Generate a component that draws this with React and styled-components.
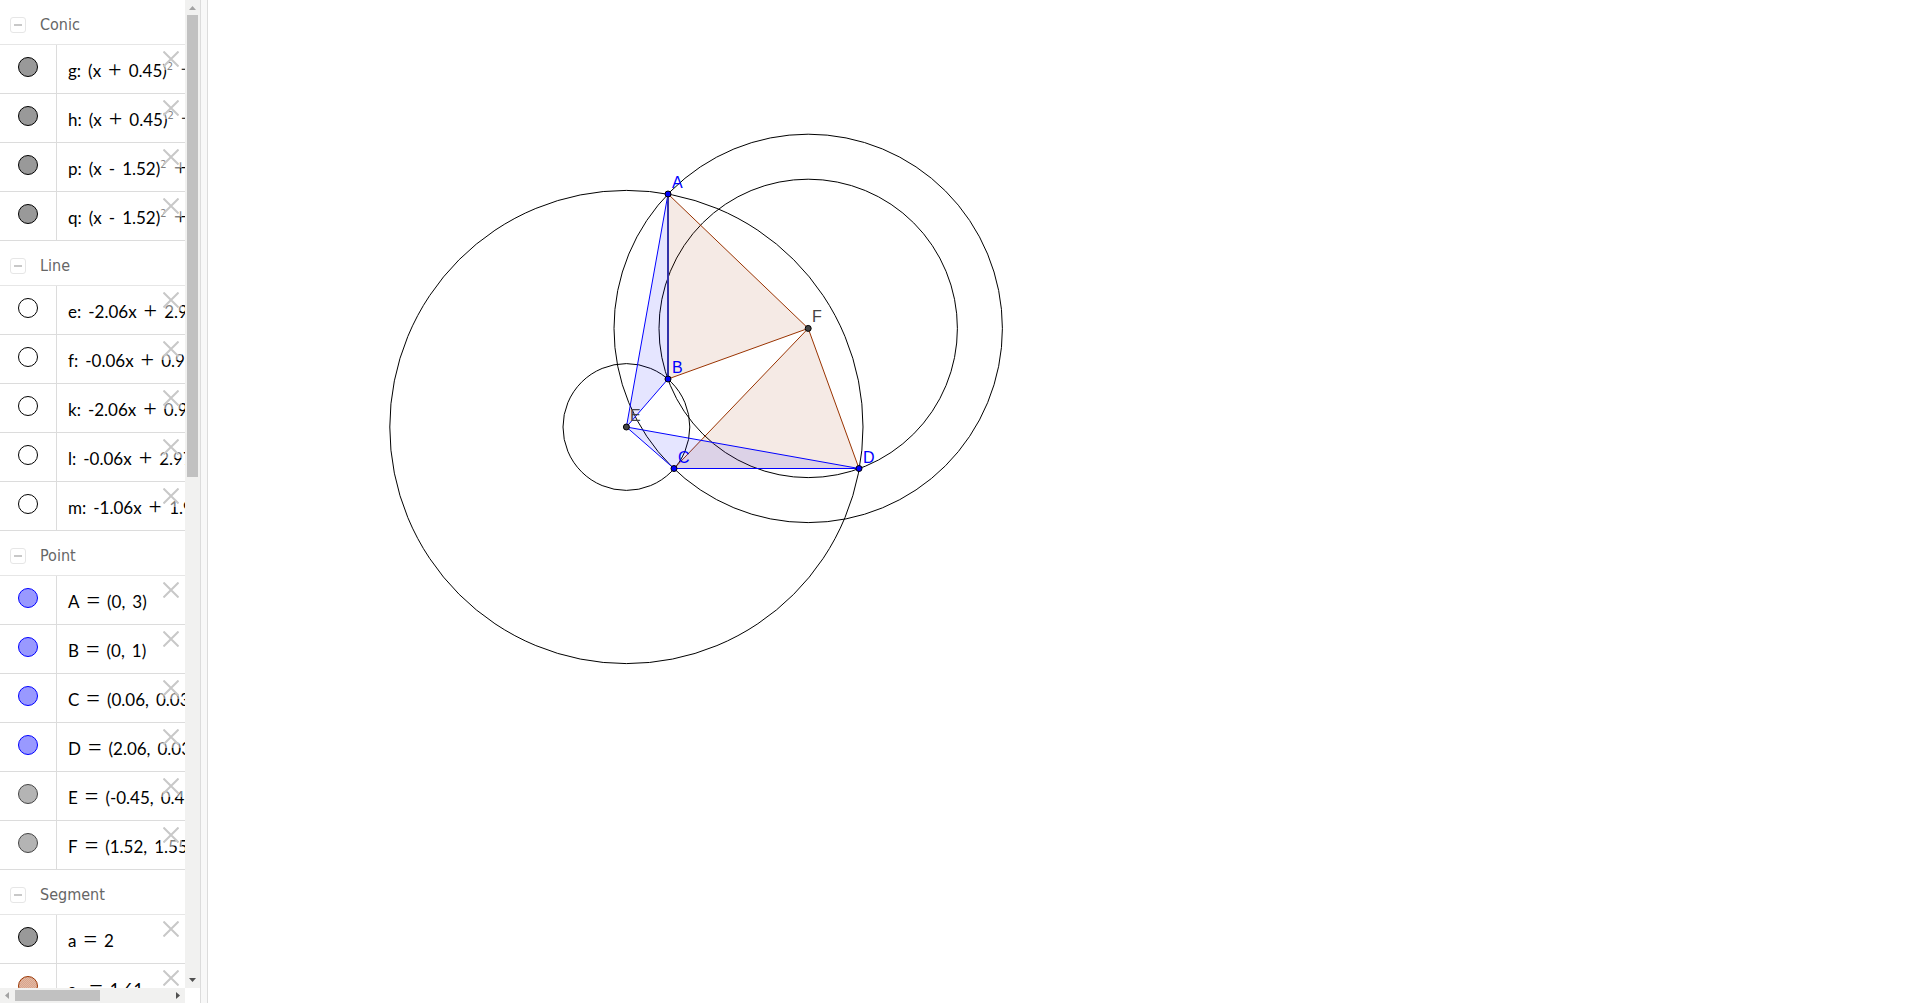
import React from "react";
import styled, { createGlobalStyle, css } from "styled-components";

const GlobalStyle = createGlobalStyle`
	body {
		margin: 0;
		background: #fff;
		overflow: hidden;
	}
`;

const StyledPage = styled.div`
	box-sizing: border-box;
	display: flex;
	height: 100vh;
	padding-bottom: 2px;
`;

const StyledSidebar = styled.aside`
	flex: none;
	width: 200px;
	display: grid;
	grid-template-columns: minmax(0, 1fr) 15px;
	grid-template-rows: minmax(0, 1fr) 15px;
`;

const StyledList = styled.div`
	overflow: hidden;
`;

const StyledDragger = styled.div`
	flex: none;
	width: 6px;
	background: #f8f8f8;
	border-left: 1px solid #dcdcdc;
	border-right: 1px solid #dcdcdc;
`;

const StyledGroupHeader = styled.div`
	box-sizing: border-box;
	height: 45px;
	padding: 0 10px;
	display: flex;
	align-items: center;
	gap: 14px;
	border-bottom: 1px solid #e6e6e6;
`;

const StyledTitle = styled.h2`
	margin: 0;
	padding-top: 6px;
	font: 400 16px/22px "DejaVu Sans Condensed", "Open Sans", sans-serif;
	color: #666;
`;

const StyledCollapse = styled.button`
	box-sizing: border-box;
	width: 16px;
	height: 16px;
	margin-top: 5px;
	padding: 0;
	display: flex;
	align-items: center;
	justify-content: center;
	background: #fff;
	border: 1px solid #e6e6e6;
	border-radius: 3px;

	&::before {
		content: "";
		width: 8px;
		height: 2px;
		background: #c8c8c8;
	}
`;

const StyledRow = styled.div`
	position: relative;
	box-sizing: border-box;
	height: 49px;
	display: flex;
	border-bottom: 1px solid #dcdcdc;
`;

const StyledMarbleCell = styled.div`
	box-sizing: border-box;
	flex: none;
	width: 57px;
	padding: 12px 18px;
	border-right: 1px solid #dcdcdc;
`;

const StyledMarble = styled.button`
	box-sizing: border-box;
	display: block;
	width: 20px;
	height: 20px;
	padding: 0;
	border-radius: 50%;
	border: 1px solid ${({ $line }) => $line};
	background: ${({ $fill }) => $fill};
`;

const StyledFormula = styled.div`
	display: flex;
	flex: 1;
	align-items: baseline;
	gap: 7px;
	padding: 14px 0 0 11px;
	overflow: hidden;
	white-space: nowrap;
	font: 400 17px/24px Lato, sans-serif;
	color: #000;

	sup {
		font: 400 10px/1 "DejaVu Sans", sans-serif;
		line-height: 0;
		vertical-align: 7px;
	}
`;

const StyledToken = styled.span`
	${({ $operator }) =>
		$operator &&
		css`
			font: 400 24px/20px "Liberation Serif", serif;
		`}
`;

const StyledClose = styled.button`
	box-sizing: border-box;
	position: absolute;
	top: 3px;
	right: 3px;
	width: 22px;
	height: 22px;
	padding: 3px;
	border: 0;
	background: rgba(255, 255, 255, 0.5);

	svg {
		display: block;
	}
`;

const StyledVerticalBar = styled.div`
	display: flex;
	flex-direction: column;
	align-items: center;
	justify-content: space-between;
	background: #f1f1f0;
`;

const StyledHorizontalBar = styled.div`
	display: flex;
	align-items: center;
	justify-content: space-between;
	background: #f1f1f0;
`;

const StyledArrow = styled.button`
	flex: none;
	width: 15px;
	height: 15px;
	padding: 0;
	border: 0;
	background: none;

	svg {
		display: block;
	}
`;

const StyledTrack = styled.div`
	flex: 1;
	display: flex;
	flex-direction: ${({ $vertical }) => ($vertical ? "column" : "row")};
	align-items: center;
`;

const StyledThumb = styled.div`
	width: ${({ $vertical }) => ($vertical ? "11px" : "55%")};
	height: ${({ $vertical }) => ($vertical ? "48.2%" : "11px")};
	background: #c1c1c1;
`;

const StyledCanvas = styled.main`
	flex: 1;
	min-width: 0;
	overflow: hidden;

	svg {
		display: block;
	}

	text {
		font: 400 16px "Liberation Sans", sans-serif;
	}
`;

const marbles = {
	dark: { $line: "#000", $fill: "#999" },
	hidden: { $line: "#000", $fill: "#fff" },
	blue: { $line: "#00f", $fill: "#99f" },
	grey: { $line: "#444", $fill: "#b4b4b4" },
	brown: {
		$line: "#993300",
		$fill: "repeating-conic-gradient(#d9a58c 0 25%, #e2b9a5 0 50%) 0 0 / 2px 2px",
	},
};

const groups = [
	{
		title: "Conic",
		items: [
			{ text: "g: (x + 0.45)² −", marble: "dark" },
			{ text: "h: (x + 0.45)² −", marble: "dark" },
			{ text: "p: (x - 1.52)² +", marble: "dark" },
			{ text: "q: (x - 1.52)² +", marble: "dark" },
		],
	},
	{
		title: "Line",
		items: [
			{ text: "e: -2.06x + 2.97", marble: "hidden" },
			{ text: "f: -0.06x + 0.97", marble: "hidden" },
			{ text: "k: -2.06x + 0.97", marble: "hidden" },
			{ text: "l: -0.06x + 2.97", marble: "hidden" },
			{ text: "m: -1.06x + 1.9", marble: "hidden" },
		],
	},
	{
		title: "Point",
		items: [
			{ text: "A = (0, 3)", marble: "blue" },
			{ text: "B = (0, 1)", marble: "blue" },
			{ text: "C = (0.06, 0.03)", marble: "blue" },
			{ text: "D = (2.06, 0.03)", marble: "blue" },
			{ text: "E = (-0.45, 0.48)", marble: "grey" },
			{ text: "F = (1.52, 1.55)", marble: "grey" },
		],
	},
	{
		title: "Segment",
		items: [
			{ text: "a = 2", marble: "dark" },
			{ text: "a₁ = 1.61", marble: "brown" },
		],
	},
];

const points = [
	{ name: "A", x: 460, y: 194, color: "#00f" },
	{ name: "B", x: 460, y: 379, color: "#00f" },
	{ name: "C", x: 466, y: 468.5, color: "#00f" },
	{ name: "D", x: 651, y: 468.5, color: "#00f" },
	{ name: "E", x: 418.4, y: 427, color: "#444" },
	{ name: "F", x: 600.2, y: 328.4, color: "#444" },
];

const circles = [
	{ cx: 418.4, cy: 427, r: 236.6 },
	{ cx: 418.4, cy: 427, r: 63.4 },
	{ cx: 600.2, cy: 328.4, r: 194.2 },
	{ cx: 600.2, cy: 328.4, r: 149.2 },
];

const triangles = [
	{ points: "460,194 460,379 600.2,328.4", color: "#993300" },
	{ points: "466,468.5 651,468.5 600.2,328.4", color: "#993300" },
	{ points: "460,194 460,379 418.4,427", color: "#00f" },
	{ points: "466,468.5 651,468.5 418.4,427", color: "#00f" },
];

const arrows = {
	up: "M4 10 L7.5 6 L11 10 Z",
	down: "M4 5 L7.5 9 L11 5 Z",
	left: "M9 4 L5 7.5 L9 11 Z",
	right: "M6 4 L10 7.5 L6 11 Z",
};

const Arrow = ({ direction, color }) => (
	<StyledArrow aria-label={`Scroll ${direction}`}>
		<svg width="15" height="15">
			<path d={arrows[direction]} fill={color} />
		</svg>
	</StyledArrow>
);

const Formula = ({ text }) => (
	<StyledFormula>
		{text.split(" ").map((token, i) => (
			<StyledToken key={i} $operator={/^[+=−]$/.test(token)}>
				{token.replace("²", "")}
				{token.endsWith("²") && <sup>2</sup>}
			</StyledToken>
		))}
	</StyledFormula>
);

const Row = ({ text, marble }) => (
	<StyledRow>
		<StyledMarbleCell>
			<StyledMarble aria-label="Show or hide" {...marbles[marble]} />
		</StyledMarbleCell>
		<Formula text={text} />
		<StyledClose aria-label="Delete">
			<svg width="16" height="16" stroke="#c8c8c8" strokeWidth="2">
				<path d="M0.5 0.5 L15.5 15.5 M15.5 0.5 L0.5 15.5" />
			</svg>
		</StyledClose>
	</StyledRow>
);

const GraphicsView = () => (
	<StyledCanvas>
		<svg width="100%" height="100%">
			{circles.map((circle, i) => (
				<circle key={i} {...circle} fill="none" stroke="#000" />
			))}
			{triangles.map(({ points: corners, color }) => (
				<polygon
					key={corners}
					points={corners}
					fill={color}
					fillOpacity="0.1"
					stroke={color}
				/>
			))}
			<path d="M460 194 V379" stroke="#33a" strokeWidth="2" />
			{points.map(({ name, x, y, color }) => (
				<g key={name}>
					<circle cx={x} cy={y} r="3" fill={color} stroke="#000" />
					<text x={Math.round(x) + 4} y={Math.round(y) - 6} fill={color}>
						{name}
					</text>
				</g>
			))}
		</svg>
	</StyledCanvas>
);

const App = () => {
	return (
		<>
			<GlobalStyle />
			<StyledPage>
				<StyledSidebar>
					<StyledList>
						{groups.map(({ title, items }) => (
							<section key={title}>
								<StyledGroupHeader>
									<StyledCollapse aria-label={`Collapse ${title}`} />
									<StyledTitle>{title}</StyledTitle>
								</StyledGroupHeader>
								{items.map((item) => (
									<Row key={item.text} {...item} />
								))}
							</section>
						))}
					</StyledList>
					<StyledVerticalBar>
						<Arrow direction="up" color="#a3a3a3" />
						<StyledTrack $vertical>
							<StyledThumb $vertical />
						</StyledTrack>
						<Arrow direction="down" color="#505050" />
					</StyledVerticalBar>
					<StyledHorizontalBar>
						<Arrow direction="left" color="#a3a3a3" />
						<StyledTrack>
							<StyledThumb />
						</StyledTrack>
						<Arrow direction="right" color="#505050" />
					</StyledHorizontalBar>
				</StyledSidebar>
				<StyledDragger />
				<GraphicsView />
			</StyledPage>
		</>
	);
};

export default App;
